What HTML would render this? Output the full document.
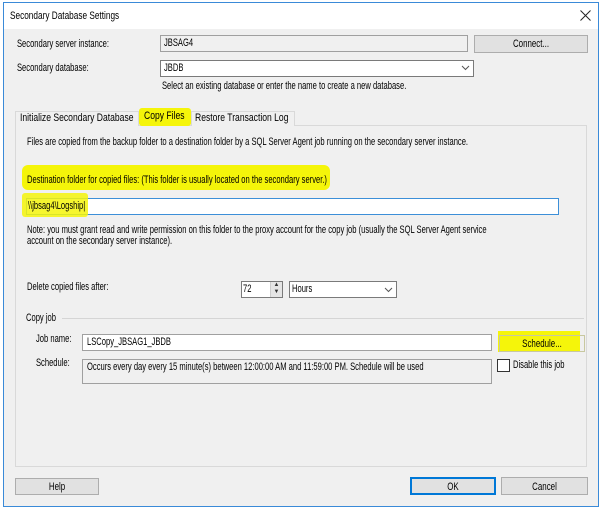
<!DOCTYPE html>
<html><head><meta charset="utf-8"><style>
*{margin:0;padding:0;box-sizing:border-box}
body{width:602px;height:510px;background:#fff;position:relative;overflow:hidden;font-family:"Liberation Sans",sans-serif;font-size:11px;color:#000}
.a{position:absolute}
.t{position:absolute;white-space:nowrap;transform:scaleX(0.69);transform-origin:0 0;line-height:13px}
.tc{position:absolute;white-space:nowrap;transform:scaleX(0.72);transform-origin:50% 0;line-height:13px;text-align:center}
.box{position:absolute;border:1px solid #7a7a7a;background:#fff}
.btn{position:absolute;border:1px solid #adadad;background:#e1e1e1}
</style></head><body>
<div class="a" style="left:3px;top:2px;width:596px;height:505px;border:1px solid #3a8ad8;background:#f0f0f0"></div>
<div class="a" style="left:4px;top:3px;width:594px;height:26px;background:#fff"></div>
<div class="t" style="left:10px;top:10px;transform:scaleX(0.75)">Secondary Database Settings</div>
<svg class="a" style="left:580px;top:10px" width="11" height="11"><path d="M0.5 0.5L10.5 10.5M10.5 0.5L0.5 10.5" stroke="#222" stroke-width="1"/></svg>

<div class="t" style="left:17px;top:38px">Secondary server instance:</div>
<div class="box" style="left:160px;top:35px;width:308px;height:17px;background:#f0f0f0;border-color:#a0a0a0"></div>
<div class="t" style="left:164px;top:37px">JBSAG4</div>
<div class="btn" style="left:474px;top:35px;width:114px;height:18px"></div>
<div class="tc" style="left:474px;top:38px;width:114px">Connect...</div>

<div class="t" style="left:17px;top:62px">Secondary database:</div>
<div class="box" style="left:160px;top:60px;width:314px;height:17px"></div>
<div class="t" style="left:164px;top:62px">JBDB</div>
<svg class="a" style="left:461px;top:65px" width="9" height="6"><path d="M1 1L4.5 4.5L8 1" stroke="#555" fill="none"/></svg>
<div class="t" style="left:162px;top:80px">Select an existing database or enter the name to create a new database.</div>

<!-- tab panel -->
<div class="a" style="left:15px;top:125px;width:572px;height:342px;border:1px solid #d9d9d9;background:#f0f0f0"></div>
<div class="a" style="left:15px;top:111px;width:124px;height:15px;border:1px solid #d9d9d9;border-bottom:none;background:#f0f0f0"></div>
<div class="t" style="left:20px;top:112px;transform:scaleX(0.78)">Initialize Secondary Database</div>
<div class="a" style="left:139px;top:108px;width:52px;height:18px;background:#f5f50a;border-radius:3px"></div>
<div class="t" style="left:144px;top:110px;transform:scaleX(0.78)">Copy Files</div>
<div class="a" style="left:191px;top:111px;width:104px;height:15px;border:1px solid #d9d9d9;border-bottom:none;background:#f0f0f0"></div>
<div class="t" style="left:195px;top:112px;transform:scaleX(0.78)">Restore Transaction Log</div>

<div class="t" style="left:27px;top:136px">Files are copied from the backup folder to a destination folder by a SQL Server Agent job running on the secondary server instance.</div>
<div class="a" style="left:22px;top:165px;width:308px;height:25px;background:#f5f50a;border-radius:6px"></div>
<div class="t" style="left:27px;top:174px">Destination folder for copied files: (This folder is usually located on the secondary server.)</div>
<div class="box" style="left:26px;top:198px;width:533px;height:17px;border-color:#3c8fd8"></div>
<div class="a" style="left:22px;top:193px;width:66px;height:24px;background:#f5f50a;opacity:.85;border-radius:3px"></div>
<div class="t" style="left:28px;top:200px">\\jbsag4\Logship|</div>
<div class="t" style="left:27px;top:224px">Note: you must grant read and write permission on this folder to the proxy account for the copy job (usually the SQL Server Agent service</div>
<div class="t" style="left:27px;top:235px">account on the secondary server instance).</div>

<div class="t" style="left:27px;top:281px">Delete copied files after:</div>
<div class="box" style="left:241px;top:281px;width:42px;height:17px"></div>
<div class="t" style="left:243px;top:283px">72</div>
<div class="a" style="left:270px;top:282px;width:12px;height:15px;background:#e5e5e5;border-left:1px solid #ccc;font-size:6px;line-height:7px;text-align:center;color:#333">▲<br>▼</div>
<div class="box" style="left:289px;top:281px;width:108px;height:17px"></div>
<div class="t" style="left:292px;top:283px">Hours</div>
<svg class="a" style="left:384px;top:287px" width="9" height="6"><path d="M1 1L4.5 4.5L8 1" stroke="#555" fill="none"/></svg>

<div class="t" style="left:26px;top:312px">Copy job</div>
<div class="a" style="left:62px;top:318px;width:522px;height:1px;background:#d5d5d5"></div>
<div class="t" style="left:36px;top:333px">Job name:</div>
<div class="box" style="left:82px;top:334px;width:410px;height:17px;border-color:#a0a0a0"></div>
<div class="t" style="left:87px;top:336px">LSCopy_JBSAG1_JBDB</div>
<div class="a" style="left:498px;top:331px;width:82px;height:21px;background:#f5f50a"></div>
<div class="a" style="left:499px;top:335px;width:86px;height:17px;border:1px solid #c8c8a0"></div>
<div class="tc" style="left:499px;top:338px;width:86px">Schedule...</div>
<div class="t" style="left:36px;top:357px">Schedule:</div>
<div class="box" style="left:82px;top:359px;width:410px;height:25px;background:#f0f0f0;border-color:#a0a0a0"></div>
<div class="t" style="left:87px;top:361px">Occurs every day every 15 minute(s) between 12:00:00 AM and 11:59:00 PM. Schedule will be used</div>
<div class="box" style="left:497px;top:359px;width:13px;height:13px;border-color:#333"></div>
<div class="t" style="left:513px;top:359px">Disable this job</div>

<div class="btn" style="left:15px;top:478px;width:84px;height:17px"></div>
<div class="tc" style="left:15px;top:481px;width:84px">Help</div>
<div class="btn" style="left:410px;top:477px;width:86px;height:18px;border:2px solid #0078d7"></div>
<div class="tc" style="left:410px;top:481px;width:86px">OK</div>
<div class="btn" style="left:501px;top:477px;width:87px;height:18px"></div>
<div class="tc" style="left:501px;top:481px;width:87px">Cancel</div>
</body></html>
